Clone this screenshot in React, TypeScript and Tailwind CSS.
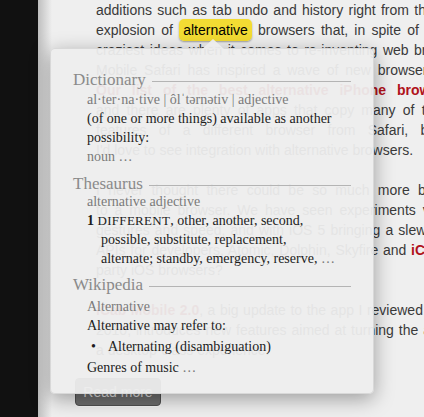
const serif = "font-['Liberation_Serif',serif]";

function Line({ children, last }: { children: React.ReactNode; last?: boolean }) {
  return (
    <div className={last ? "h-[20px] w-[378px]" : "h-[20px] w-[378px] text-justify [text-align-last:justify]"}>
      {children}
    </div>
  );
}

function Red({ children }: { children: React.ReactNode }) {
  return <span className="font-bold text-[#b0121b]">{children}</span>;
}

function SectionHeader({ title }: { title: string }) {
  return (
    <div className="flex h-[20px] items-center gap-[6px]">
      <span className="text-[17px] leading-[20px] text-[#8a8a8a]">{title}</span>
      <div className="mt-[2px] h-px flex-1 bg-[#b4b4b4]" />
    </div>
  );
}

function Article() {
  return (
    <div className="flex-1 pl-[44px] font-['Liberation_Sans',sans-serif] text-[14px] leading-[20px] text-[#3a3a3a]">
      <div>
        <Line>additions such as tab undo and history right from the menu</Line>
        <Line>
          explosion of{" "}
          <span className="rounded-[5px] bg-[#f3dc33] px-[4px] py-[3px] text-black shadow-[0_1px_2px_rgba(0,0,0,0.35)]">
            alternative
          </span>{" "}
          browsers that, in spite of the odd
        </Line>
        <Line>craziest ideas when it comes to re-inventing web browsing,</Line>
        <Line>Mobile Safari has inspired a wave of new browsers since</Line>
        <Line>
          <Red>Our list of the best alternative iPhone browsers</Red> I
        </Line>
        <Line>and there are plenty of apps that copy many of the new</Line>
        <Line>features of a different browser from Safari, but few</Line>
        <Line last>I'd love to see integration with alternative browsers.</Line>
      </div>
      <div className="mt-[20px]">
        <Line>I never thought there could be so much more browsing</Line>
        <Line>to a mobile browser. We have seen experiments via tabs</Line>
        <Line>gestures and speed, and with iOS 5 bringing a slew of new</Line>
        <Line>
          APIs for developers, Atomic, Dolphin, Skyfire and <Red>iCab</Red> offer
        </Line>
        <Line last>party iOS browsers?</Line>
      </div>
      <div className="mt-[20px]">
        <Line>
          <Red>iCab Mobile 2.0</Red>, a big update to the app I reviewed in April,
        </Line>
        <Line>2010, introduces new features aimed at turning the app into</Line>
        <Line last>a desktop-class experience.</Line>
      </div>
      <button className="ml-[-21px] mt-[18px] h-[28px] w-[86px] rounded-[4px] border border-[#4f4f4f] bg-[#6d6d6d] text-[14px] text-[#dcdcdc] shadow-[0_1px_1px_rgba(255,255,255,0.6)]">
        Read more
      </button>
    </div>
  );
}

function Popover() {
  return (
    <div
      className={`absolute left-[50px] top-[48px] h-[346px] w-[324px] rounded-[5px] border border-[#cfcfcf]/70 bg-[#ededed]/[0.95] px-[22px] pt-[21px] shadow-[0_5px_20px_rgba(0,0,0,0.35)] ${serif}`}
    >
      <div className="absolute left-[151px] top-[-10px] h-[10px] w-[22px] bg-[#ededed]/[0.95] [clip-path:polygon(50%_0,100%_100%,0_100%)]" />

      <SectionHeader title="Dictionary" />
      <div className="pl-[14px] text-[14px] leading-[19px] text-[#1c1c1c]">
        <div className="text-[#7a7a7a]">al·ter·na·tive | ôlˈtərnətiv | adjective</div>
        <div>
          (of one or more things) available as another
          <br />
          possibility:
        </div>
        <div className="text-[#7a7a7a]">noun …</div>
      </div>

      <div className="mt-[8px]">
        <SectionHeader title="Thesaurus" />
      </div>
      <div className="-mt-[2px] pl-[14px] text-[14px] leading-[19px] text-[#1c1c1c]">
        <div className="text-[#7a7a7a]">alternative adjective</div>
        <div className="pl-[14px] -indent-[14px]">
          <span className="font-bold">1</span>{" "}
          <span className="text-[13px] tracking-[0.3px]">DIFFERENT</span>, other, another, second,
          <br />
          possible, substitute, replacement,
          <br />
          alternate; standby, emergency, reserve, <span className="text-[#7a7a7a]">…</span>
        </div>
      </div>

      <div className="mt-[7px]">
        <SectionHeader title="Wikipedia" />
      </div>
      <div className="pl-[14px] pt-[2px] text-[14px] leading-[19px] text-[#1c1c1c]">
        <div className="text-[#7a7a7a]">Alternative</div>
        <div>Alternative may refer to:</div>
        <div className="mt-[2px] flex">
          <span className="w-[21px] pl-[4px]">•</span>
          <span>Alternating (disambiguation)</span>
        </div>
        <div className="mt-[2px]">
          Genres of music <span className="text-[#7a7a7a]">…</span>
        </div>
      </div>
    </div>
  );
}

export default function App() {
  return (
    <div className="relative flex h-[417px] w-[424px] overflow-hidden bg-[#efefef]">
      <div className="w-[38px] shrink-0 bg-[#111111]" />
      <div className="w-[14px] shrink-0 bg-gradient-to-r from-[#bfbfbf] to-[#efefef]" />
      <Article />
      <Popover />
    </div>
  );
}
